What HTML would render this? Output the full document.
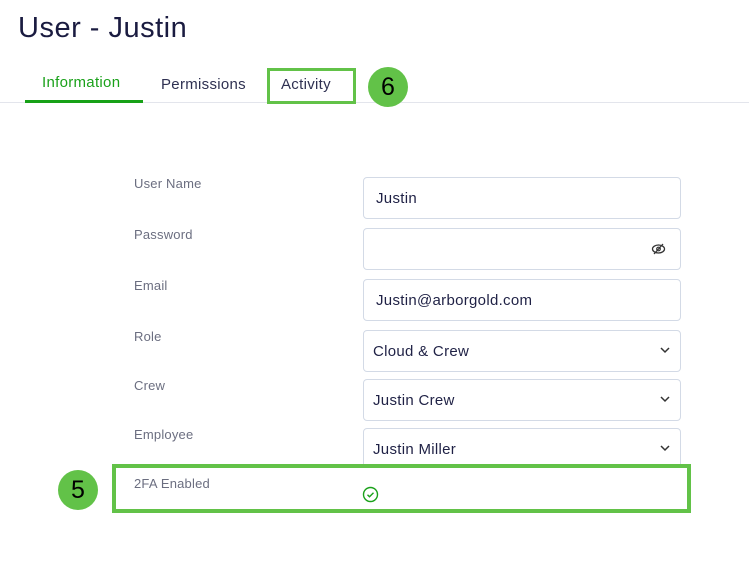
<!DOCTYPE html>
<html><head><meta charset="utf-8"><style>
body{margin:0;width:749px;height:566px;background:#fff;font-family:"Liberation Sans",sans-serif;position:relative;overflow:hidden;color:#1f2145}
.a{position:absolute}
.lbl{position:absolute;left:134px;font-size:13px;color:#6b6e80;letter-spacing:0.2px}
.inp{position:absolute;left:363px;width:316px;height:40px;border:1px solid #d3dae6;border-radius:4px;box-sizing:content-box;font-size:15px;color:#1f2145;letter-spacing:0.3px}
.inp span{position:absolute;left:12px;top:12px}
.chev{position:absolute;right:10px;top:15px}
.circ{position:absolute;width:40px;height:40px;border-radius:50%;background:#62c248;color:#000;font-size:25px;text-align:center;line-height:40px}
</style></head><body>
<div class="a" style="left:18px;top:12px;font-size:29px;color:#1a1b40;letter-spacing:0.5px">User - Justin</div>
<div class="a" style="left:0;top:102px;width:749px;height:1px;background:#e3e5ec"></div>
<div class="a" style="left:42px;top:74px;font-size:15px;color:#1aa11a;letter-spacing:0.3px">Information</div>
<div class="a" style="left:25px;top:100px;width:118px;height:3px;background:#17a117"></div>
<div class="a" style="left:161px;top:76px;font-size:15px;color:#2f3152;letter-spacing:0.3px">Permissions</div>
<div class="a" style="left:267px;top:68px;width:83px;height:30px;border:3px solid #62c248"></div>
<div class="a" style="left:281px;top:76px;font-size:15px;color:#2f3152;letter-spacing:0.3px">Activity</div>
<div class="circ" style="left:368px;top:67px">6</div>

<div class="lbl" style="top:176px">User Name</div>
<div class="inp" style="top:177px"><span>Justin</span></div>
<div class="lbl" style="top:227px">Password</div>
<div class="inp" style="top:228px"><svg class="a" style="right:14px;top:13px" width="15" height="14" viewBox="0 0 15 14"><ellipse cx="7.5" cy="7" rx="6" ry="4" fill="none" stroke="#333" stroke-width="1.3"/><circle cx="7.5" cy="7" r="1.8" fill="none" stroke="#333" stroke-width="1.2"/><line x1="3" y1="12" x2="12" y2="2" stroke="#333" stroke-width="1.3"/></svg></div>
<div class="lbl" style="top:278px">Email</div>
<div class="inp" style="top:279px"><span>Justin@arborgold.com</span></div>
<div class="lbl" style="top:329px">Role</div>
<div class="inp" style="top:330px"><span style="left:9px">Cloud &amp; Crew</span><svg class="chev" width="10" height="8" viewBox="0 0 10 8"><path d="M1 2l4 4 4-4" fill="none" stroke="#333" stroke-width="1.5"/></svg></div>
<div class="lbl" style="top:378px">Crew</div>
<div class="inp" style="top:379px"><span style="left:9px">Justin Crew</span><svg class="chev" width="10" height="8" viewBox="0 0 10 8"><path d="M1 2l4 4 4-4" fill="none" stroke="#333" stroke-width="1.5"/></svg></div>
<div class="lbl" style="top:427px">Employee</div>
<div class="inp" style="top:428px"><span style="left:9px">Justin Miller</span><svg class="chev" width="10" height="8" viewBox="0 0 10 8"><path d="M1 2l4 4 4-4" fill="none" stroke="#333" stroke-width="1.5"/></svg></div>
<div class="a" style="left:112px;top:464px;width:571px;height:41px;border:4px solid #62c248;background:#fff"></div>
<div class="lbl" style="top:476px">2FA Enabled</div>
<svg class="a" style="left:362px;top:486px" width="17" height="17" viewBox="0 0 17 17"><circle cx="8.5" cy="8.5" r="7" fill="none" stroke="#1aa11a" stroke-width="1.4"/><path d="M5.5 8.7l2 2 4-4" fill="none" stroke="#1aa11a" stroke-width="1.4"/></svg>
<div class="circ" style="left:58px;top:470px">5</div>
</body></html>
